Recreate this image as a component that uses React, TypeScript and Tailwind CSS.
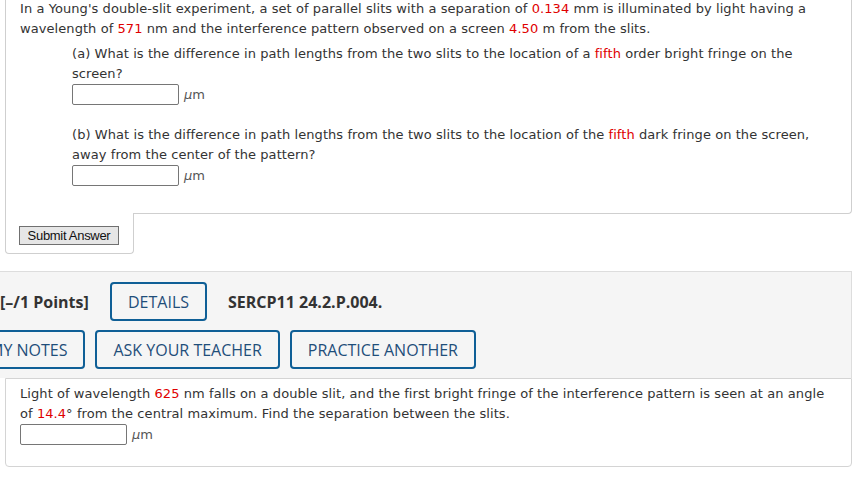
import React from 'react';

const R = ({ children }: { children: React.ReactNode }) => <span className="text-[#e00000]">{children}</span>;

const Answer = () => (
  <div className="flex items-center h-[21px]">
    <div className="w-[107px] h-[21px] border border-[#767676] rounded-[2px] bg-white" />
    <span className="ml-[5px] text-[#555]"><i>μ</i>m</span>
  </div>
);

const OutlineButton = ({ label, className = '' }: { label: string; className?: string }) => (
  <div
    className={`h-[39px] px-[16px] flex items-center border-2 border-[#0f5f96] rounded-[4px] text-[#1f4e7a] text-[16px] font-medium ${className}`}
  >
    {label}
  </div>
);

export default function App() {
  return (
    <div className="w-[867px] h-[486px] overflow-hidden bg-white text-[#333] text-[13px] leading-[20px] tracking-[0.07px] font-['DejaVu_Sans',Verdana,sans-serif]">
      {/* first question, scrolled so its top is above the window */}
      <div className="ml-[5px] w-[847px] -mt-px border-x border-b border-[#cfcfcf] rounded-br-[4px] pl-[14px] pr-[18px] pb-[27px]">
        <p>
          In a Young's double-slit experiment, a set of parallel slits with a separation of <R>0.134</R> mm is
          illuminated by light having a wavelength of <R>571</R> nm and the interference pattern observed on a
          screen <R>4.50</R> m from the slits.
        </p>
        <div className="pl-[52px] mt-[5px]">
          <p>
            (a) What is the difference in path lengths from the two slits to the location of a <R>fifth</R> order
            bright fringe on the screen?
          </p>
          <Answer />
          <p className="mt-[20px]">
            (b) What is the difference in path lengths from the two slits to the location of the <R>fifth</R> dark
            fringe on the screen, away from the center of the pattern?
          </p>
          <Answer />
        </div>
      </div>
      <div className="ml-[5px] w-[129px] h-[41px] -mt-px bg-white border-x border-b border-[#cfcfcf] rounded-b-[4px] pl-[13px] pt-[13px]">
        <button className="h-[19px] w-[100px] bg-[#e6e6e6] border border-[#707070] text-[13px] leading-[17px] tracking-[-0.3px] text-[#111] font-['Liberation_Sans',Arial,sans-serif]">
          Submit Answer
        </button>
      </div>

      {/* second question header */}
      <div className="mt-[17px] w-[852px] bg-[#f5f5f5] border-t border-r border-[#dddddd] pt-[10px] pb-[9px] tracking-normal font-['Open_Sans',sans-serif]">
        <div className="flex items-center">
          <span className="text-[16px] font-bold text-[#333] w-[110px]">[–/1 Points]</span>
          <OutlineButton label="DETAILS" />
          <span className="ml-[21px] text-[16px] font-bold text-[#333]">SERCP11 24.2.P.004.</span>
        </div>
        <div className="flex items-center gap-[10px] mt-[9px] -ml-[29px]">
          <OutlineButton label="MY NOTES" />
          <OutlineButton label="ASK YOUR TEACHER" />
          <OutlineButton label="PRACTICE ANOTHER" />
        </div>
      </div>
      <div className="ml-[5px] w-[847px] border border-[#d4d4d4] rounded-b-[4px] pl-[14px] pr-[18px] pt-[5px] pb-[21px]">
        <p>
          Light of wavelength <R>625</R> nm falls on a double slit, and the first bright fringe of the interference
          pattern is seen at an angle of <R>14.4</R>° from the central maximum. Find the separation between the slits.
        </p>
        <Answer />
      </div>
    </div>
  );
}
